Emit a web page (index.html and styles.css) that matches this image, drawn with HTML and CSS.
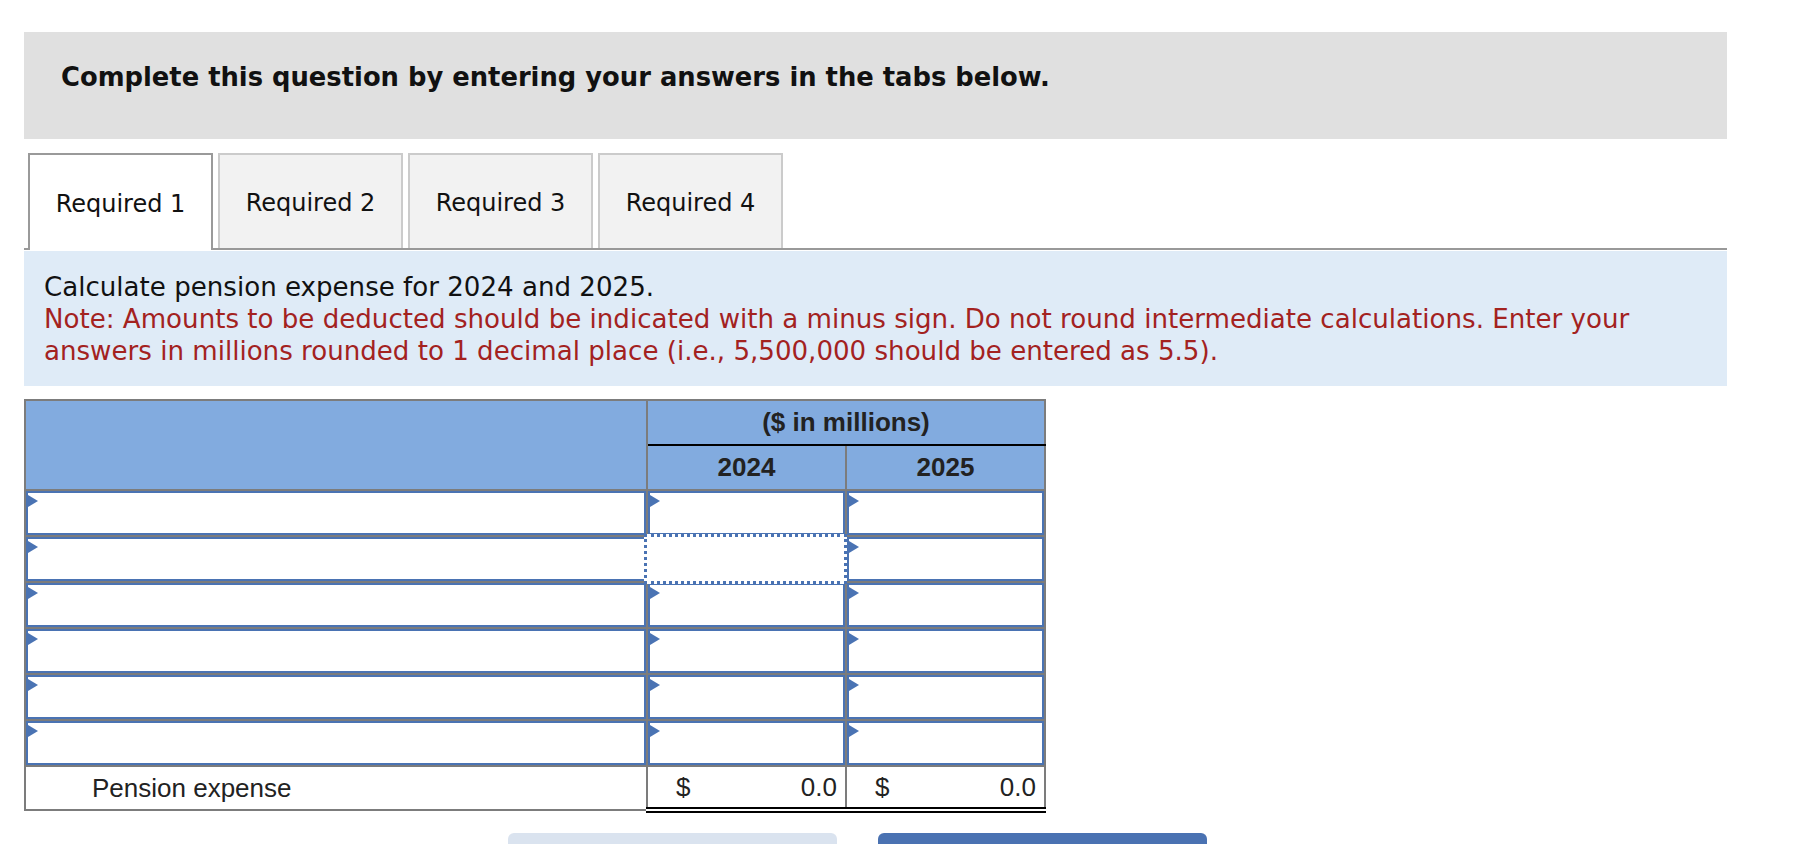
FILE: index.html
```html
<!DOCTYPE html>
<html lang="en">
<head>
  <meta charset="UTF-8">
  <title>Required 1 - Pension expense</title>
  <link rel="stylesheet" href="styles.css">
</head>
<body>
  <div class="prompt">Complete this question by entering your answers in the tabs below.</div>

  <div class="tabs">
    <div class="tab active">Required 1</div>
    <div class="tab">Required 2</div>
    <div class="tab">Required 3</div>
    <div class="tab">Required 4</div>
  </div>

  <div class="instructions">
    <p>Calculate pension expense for 2024 and 2025.</p>
    <p class="note">Note: Amounts to be deducted should be indicated with a minus sign. Do not round intermediate calculations. Enter your answers in millions rounded to 1 decimal place (i.e., 5,500,000 should be entered as 5.5).</p>
  </div>

  <table class="worksheet">
    <colgroup>
      <col class="col-label">
      <col class="col-year">
      <col class="col-year">
    </colgroup>
    <thead>
      <tr>
        <th rowspan="2"></th>
        <th colspan="2" class="units">($ in millions)</th>
      </tr>
      <tr>
        <th>2024</th>
        <th>2025</th>
      </tr>
    </thead>
    <tbody>
      <tr class="entry">
        <td><div class="field"></div></td>
        <td><div class="field"></div></td>
        <td><div class="field"></div></td>
      </tr>
      <tr class="entry">
        <td><div class="field"></div></td>
        <td><div class="field focus"></div></td>
        <td><div class="field"></div></td>
      </tr>
      <tr class="entry">
        <td><div class="field"></div></td>
        <td><div class="field"></div></td>
        <td><div class="field"></div></td>
      </tr>
      <tr class="entry">
        <td><div class="field"></div></td>
        <td><div class="field"></div></td>
        <td><div class="field"></div></td>
      </tr>
      <tr class="entry">
        <td><div class="field"></div></td>
        <td><div class="field"></div></td>
        <td><div class="field"></div></td>
      </tr>
      <tr class="entry">
        <td><div class="field"></div></td>
        <td><div class="field"></div></td>
        <td><div class="field"></div></td>
      </tr>
      <tr class="total">
        <td class="total-label">Pension expense</td>
        <td class="amount"><div class="amount-value"><span>$</span><span>0.0</span></div></td>
        <td class="amount"><div class="amount-value"><span>$</span><span>0.0</span></div></td>
      </tr>
    </tbody>
  </table>

  <div class="actions">
    <button class="btn btn-prev" aria-label="Previous"></button>
    <button class="btn btn-next" aria-label="Next"></button>
  </div>
</body>
</html>
```

FILE: styles.css
```css
body {
  margin: 0;
  padding: 32px 79px 0 24px;
  font-family: 'DejaVu Sans', Verdana, sans-serif;
  color: #111;
  background: #fff;
}
.prompt {
  background: #e0e0e0;
  height: 107px;
  box-sizing: border-box;
  padding: 29px 37px 0;
  font-size: 25.8px;
  font-weight: bold;
  line-height: 32px;
}
.tabs {
  display: flex;
  align-items: flex-start;
  gap: 5px;
  margin-top: 14px;
  padding-left: 4px;
  height: 95px;
  border-bottom: 2px solid #999;
}
.tab {
  width: 185px;
  height: 95px;
  box-sizing: border-box;
  border: 2px solid #cbcbcb;
  border-bottom: none;
  background: #f2f2f2;
  font-size: 24px;
  display: flex;
  align-items: center;
  justify-content: center;
  padding-top: 3px;
}
.tab.active {
  background: #fff;
  border-color: #9a9a9a;
  height: 97px;
}
.instructions {
  margin-top: 1px;
  background: #dfebf7;
  padding: 20px 20px 19px;
  font-size: 26.1px;
  line-height: 32px;
}
.instructions p {
  margin: 0;
}
.instructions .note {
  color: #a3221f;
}
.worksheet {
  margin-top: 13px;
  border-collapse: collapse;
  border: 2px solid #7c7c7c;
  font-family: 'Liberation Sans', Arial, sans-serif;
  font-size: 26px;
  color: #222;
}
.col-label { width: 622px; }
.col-year { width: 199px; }
.worksheet th {
  background: #82abdf;
  border: 2px solid #7c7c7c;
  height: 43px;
  padding: 0;
  font-weight: bold;
  text-align: center;
}
.worksheet th.units {
  border-bottom: 2px solid #000;
}
.worksheet td {
  border: 2px solid #7c7c7c;
  padding: 0;
}
.entry td {
  height: 44px;
}
.field {
  position: relative;
  height: 44px;
  box-sizing: border-box;
  border: 2px solid #4a73b3;
  background: #fff;
}
.field::before {
  content: '';
  position: absolute;
  top: 2px;
  left: 0;
  border-left: 10px solid #4a73b3;
  border-top: 6px solid transparent;
  border-bottom: 6px solid transparent;
}
.field.focus {
  z-index: 1;
  height: 50px;
  margin: -3px -2px -3px -4px;
  border: 3px dotted #4a73b3;
}
.field.focus::before {
  display: none;
}
.total td {
  height: 40px;
}
.worksheet td.total-label {
  padding-left: 66px;
}
.worksheet td.amount {
  border-top: 2px solid #000;
  border-bottom: 6px double #000;
  padding: 0 8px 0 28px;
}
.amount-value {
  display: flex;
  justify-content: space-between;
  align-items: center;
}
.actions {
  display: flex;
  gap: 41px;
  margin-top: 20px;
  padding-left: 484px;
}
.btn {
  width: 329px;
  height: 50px;
  border: none;
  border-radius: 6px;
}
.btn-prev { background: #dae3ef; }
.btn-next { background: #4a72b2; }
```
